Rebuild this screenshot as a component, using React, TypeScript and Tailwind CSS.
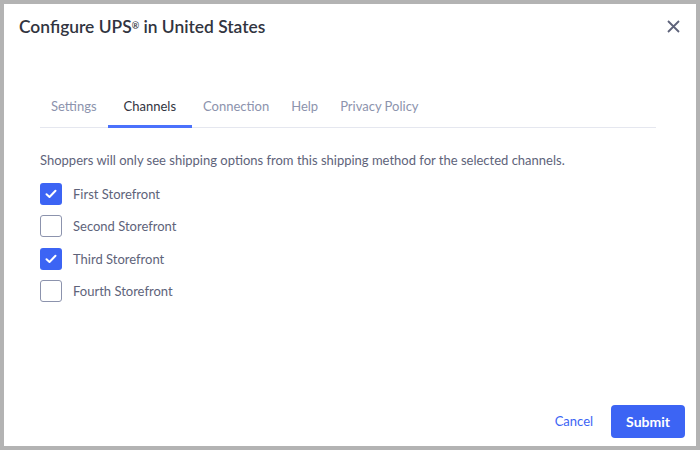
import React from 'react'

const canaux = [
  { nom: 'First Storefront', coche: true },
  { nom: 'Second Storefront', coche: false },
  { nom: 'Third Storefront', coche: true },
  { nom: 'Fourth Storefront', coche: false },
]

const onglets = ['Settings', 'Channels', 'Connection', 'Help', 'Privacy Policy']

function CaseACocher({ coche }: { coche: boolean }) {
  if (coche) {
    return (
      <span className="w-[22px] h-[22px] rounded-[3px] bg-[#3c64f4] flex items-center justify-center">
        <svg width="12" height="10" viewBox="0 0 12 10" fill="none">
          <path d="M1.5 5.2 4.5 8 10.5 1.8" stroke="white" strokeWidth="2" strokeLinecap="round" strokeLinejoin="round" />
        </svg>
      </span>
    )
  }
  return <span className="w-[22px] h-[22px] rounded-[3px] border border-[#8c93ad] bg-white" />
}

export default function App() {
  const [cases, setCases] = React.useState(canaux)

  return (
    <div className="w-[700px] h-[450px] bg-[#b3b3b3] p-[4px]" style={{ fontFamily: '"Source Sans Pro", Lato, "Noto Sans", sans-serif' }}>
      <div className="w-full h-full bg-white flex flex-col">
        {/* En-tête */}
        <div className="flex items-start justify-between pl-[15px] pr-[16px] pt-[11px]">
          <h1 className="text-[17.4px] font-semibold text-[#313440] leading-[24px]">
            Configure UPS<span className="text-[9px] align-top relative top-[-1px]">®</span> in United States
          </h1>
          <svg width="13" height="13" viewBox="0 0 13 13" className="mt-[5px]">
            <path d="M1 1 12 12M12 1 1 12" stroke="#5e637a" strokeWidth="1.8" />
          </svg>
        </div>

        {/* Onglets */}
        <div className="mt-[57px] ml-[36px] mr-[40px] border-b border-[#e5e7ef] flex">
          {onglets.map((o) => (
            <div
              key={o}
              className={
                o === 'Channels'
                  ? 'px-4 pb-[8px] text-[13px] leading-[20px] text-[#313440] border-b-[3px] border-[#4b71fc] -mb-px'
                  : 'px-[11px] pb-[11px] text-[13px] leading-[20px] text-[#8c93ad]'
              }
            >
              {o}
            </div>
          ))}
        </div>

        {/* Contenu */}
        <div className="px-[36px] pt-[22px] flex-1">
          <p className="text-[13px] leading-[20px] text-[#5e637a]">
            Shoppers will only see shipping options from this shipping method for the selected channels.
          </p>
          <div className="mt-[13px] flex flex-col gap-[10.3px]">
            {cases.map((c, i) => (
              <label
                key={c.nom}
                className="flex items-center gap-[11px] cursor-pointer"
                onClick={() => setCases(cases.map((x, j) => (j === i ? { ...x, coche: !x.coche } : x)))}
              >
                <CaseACocher coche={c.coche} />
                <span className="text-[13px] leading-[20px] text-[#5e637a]">{c.nom}</span>
              </label>
            ))}
          </div>
        </div>

        {/* Pied */}
        <div className="flex items-center justify-end gap-4 pr-[11px] pb-[8px]">
          <button className="text-[13px] text-[#3c64f4] px-[2px]">Cancel</button>
          <button className="h-[33px] px-[15px] rounded-[4px] bg-[#3c64f4] text-white text-[14px] font-bold">Submit</button>
        </div>
      </div>
    </div>
  )
}
